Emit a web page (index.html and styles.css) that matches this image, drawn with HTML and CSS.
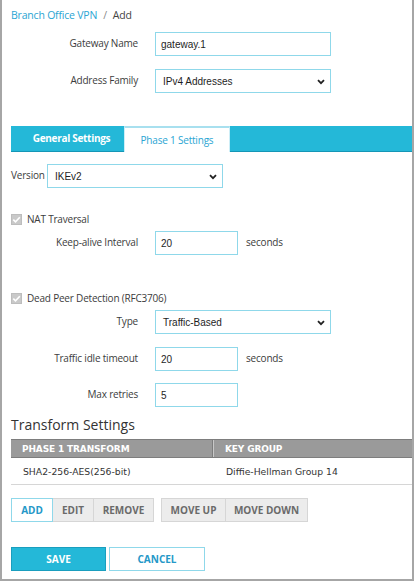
FILE: index.html
```html
<!DOCTYPE html>
<html>
<head>
<meta charset="utf-8">
<link rel="stylesheet" href="styles.css">
</head>
<body>
<div class="page">
  <nav class="crumb"><a class="crumb-link">Branch Office VPN</a><span class="crumb-sep">/</span><span class="crumb-cur">Add</span></nav>

  <div class="row row-gw">
    <span class="lbl">Gateway Name</span>
    <div class="field wide">gateway.1</div>
  </div>
  <div class="row row-af">
    <span class="lbl">Address Family</span>
    <div class="field wide select">IPv4 Addresses<svg class="chev" viewBox="0 0 8 6"><path d="M1 1.2 L4 4.2 L7 1.2" fill="none" stroke="#222" stroke-width="1.8"/></svg></div>
  </div>

  <div class="tabs">
    <div class="tab tab-gen">General Settings</div>
    <div class="tab tab-active">Phase 1 Settings</div>
    <div class="tab-fill"></div>
  </div>

  <div class="version">
    <span class="vlbl">Version</span>
    <div class="field vsel select">IKEv2<svg class="chev" viewBox="0 0 8 6"><path d="M1 1.2 L4 4.2 L7 1.2" fill="none" stroke="#222" stroke-width="1.8"/></svg></div>
  </div>

  <div class="check check-nat">
    <span class="box"><svg viewBox="0 0 11 11"><path d="M2.3 5.6 L4.5 7.8 L8.8 3.2" fill="none" stroke="#fff" stroke-width="1.6"/></svg></span>
    <span>NAT Traversal</span>
  </div>
  <div class="row row-ka">
    <span class="lbl">Keep-alive Interval</span>
    <div class="field narrow">20</div>
    <span class="unit">seconds</span>
  </div>

  <div class="check check-dpd">
    <span class="box"><svg viewBox="0 0 11 11"><path d="M2.3 5.6 L4.5 7.8 L8.8 3.2" fill="none" stroke="#fff" stroke-width="1.6"/></svg></span>
    <span>Dead Peer Detection (RFC3706)</span>
  </div>
  <div class="row row-type">
    <span class="lbl">Type</span>
    <div class="field wide select">Traffic-Based<svg class="chev" viewBox="0 0 8 6"><path d="M1 1.2 L4 4.2 L7 1.2" fill="none" stroke="#222" stroke-width="1.8"/></svg></div>
  </div>
  <div class="row row-idle">
    <span class="lbl">Traffic idle timeout</span>
    <div class="field narrow">20</div>
    <span class="unit">seconds</span>
  </div>
  <div class="row row-retry">
    <span class="lbl">Max retries</span>
    <div class="field narrow">5</div>
  </div>

  <h2 class="section">Transform Settings</h2>
  <div class="tbl">
    <div class="thead">
      <div class="th th1">PHASE 1 TRANSFORM</div>
      <div class="th th2">KEY GROUP</div>
    </div>
    <div class="trow">
      <div class="td td1">SHA2-256-AES(256-bit)</div>
      <div class="td td2">Diffie-Hellman Group 14</div>
    </div>
  </div>

  <div class="toolbar">
    <div class="btn-group">
      <button class="btn btn-add">ADD</button>
      <button class="btn btn-edit">EDIT</button>
      <button class="btn btn-remove">REMOVE</button>
    </div>
    <div class="btn-group">
      <button class="btn btn-up">MOVE UP</button>
      <button class="btn btn-down">MOVE DOWN</button>
    </div>
  </div>

  <div class="actions">
    <button class="act act-save">SAVE</button>
    <button class="act act-cancel">CANCEL</button>
  </div>
</div>
</body>
</html>
```

FILE: styles.css
```css
html, body {
  margin: 0;
  padding: 0;
  background: #fff;
}
.page {
  box-sizing: border-box;
  width: 414px;
  height: 581px;
  border-left: 2px solid #a6a6a6;
  border-right: 2px solid #a6a6a6;
  border-bottom: 2px solid #a6a6a6;
  padding: 7px 0 0 9px;
  font-family: "Open Sans", sans-serif;
  font-size: 10px;
  letter-spacing: -0.2px;
  color: #3c3c3c;
  overflow: hidden;
}
.crumb {
  height: 16px;
  line-height: 16px;
  font-size: 10.5px;
  display: flex;
}
.crumb-link { color: #2aa5d3; }
.crumb-sep { color: #888; margin: 0 6px 0 6px; }
.crumb-cur { color: #444; }

.row {
  display: grid;
  grid-template-columns: 127px auto auto;
  column-gap: 17px;
  align-items: center;
  justify-content: start;
}
.row .lbl {
  text-align: right;
  color: #3c3c3c;
  margin-top: -2px;
}
.row-gw { margin-top: 9px; }
.row-af { margin-top: 13px; }
.row-ka { margin-top: 4px; }
.row-type { margin-top: 4px; }
.row-idle { margin-top: 13px; }
.row-retry { margin-top: 12px; }

.field {
  box-sizing: border-box;
  height: 24px;
  border: 1px solid #8fd8ea;
  font-family: "Liberation Sans", Arial, sans-serif;
  font-size: 10px;
  letter-spacing: 0;
  color: #1e1e1e;
  display: flex;
  align-items: center;
  padding-left: 5px;
  background: #fff;
}
.field.wide { width: 176px; }
.field.narrow { width: 83px; }
.field.select {
  padding-left: 7px;
  position: relative;
}
.chev {
  position: absolute;
  right: 5px;
  top: 9px;
  width: 8px;
  height: 6px;
}
.unit {
  margin-left: -9px;
  color: #3c3c3c;
  margin-top: -2px;
}

.tabs {
  display: flex;
  margin-top: 33px;
  margin-right: -2px;
  height: 26px;
}
.tab {
  box-sizing: border-box;
  height: 26px;
  display: flex;
  align-items: center;
  justify-content: center;
  font-size: 10px;
}
.tab-gen {
  width: 113px;
  background: #24b8d8;
  border-bottom: 1px solid #1596b6;
  color: #fff;
  font-weight: 700;
  letter-spacing: -0.3px;
  padding: 0 0 1px 8px;
}
.tab-active {
  width: 106px;
  background: #fff;
  color: #2aa5d3;
  border-top: 2px solid #a8e0ef;
  border-left: 1px solid #cdeef7;
  border-right: 1px solid #cdeef7;
}
.tab-fill {
  flex: 1;
  background: #24b8d8;
  border-bottom: 1px solid #1596b6;
}

.version {
  display: flex;
  align-items: center;
  margin-top: 12px;
}
.vlbl { width: 36px; margin-top: -2px; }
.field.vsel { width: 176px; }

.check {
  display: flex;
  align-items: center;
  height: 16px;
  color: #3c3c3c;
}
.check-nat { margin-top: 23px; }
.check-dpd { margin-top: 35px; }
.box {
  width: 11px;
  height: 11px;
  box-sizing: border-box;
  background: #c9c9c9;
  border: 1px solid #bdbdbd;
  margin-right: 5px;
  display: flex;
}
.box svg { width: 11px; height: 11px; margin: -1px; }

.section {
  margin: 8px 0 0 0;
  font-size: 14px;
  line-height: 20px;
  letter-spacing: 0;
  font-weight: 400;
  color: #333;
}

.tbl { margin-top: 4px; }
.thead {
  display: grid;
  grid-template-columns: 202px 1fr;
  height: 19px;
  box-sizing: border-box;
  background: #9a9a9a;
  border-top: 1px solid #7d7d7d;
  border-bottom: 1px solid #7d7d7d;
}
.th {
  font-family: "DejaVu Sans", Verdana, sans-serif;
  font-weight: 700;
  font-size: 9px;
  letter-spacing: -0.15px;
  color: #fff;
  display: flex;
  align-items: center;
  padding-left: 11px;
}
.th1 { border-right: 1px solid #7d7d7d; }
.th2 { border-left: 1px solid #c8c8c8; padding-left: 11px; }
.trow {
  display: grid;
  grid-template-columns: 203px 1fr;
  height: 27px;
  box-sizing: border-box;
  border-bottom: 1px solid #d6d6d6;
}
.td {
  font-family: "DejaVu Sans", Verdana, sans-serif;
  font-size: 9.25px;
  letter-spacing: 0;
  color: #333;
  display: flex;
  align-items: center;
  padding-left: 12px;
}
.td2 { padding-left: 12px; }

.toolbar {
  display: flex;
  gap: 7px;
  margin-top: 13px;
}
.btn-group { display: flex; }
.btn {
  box-sizing: border-box;
  height: 24px;
  border: 1px solid #d6d6d6;
  background: #ececec;
  font-family: "Open Sans", sans-serif;
  font-weight: 700;
  font-size: 10px;
  letter-spacing: 0;
  color: #6a6a6a;
  padding: 0;
  margin: 0;
  margin-left: -1px;
}
.btn-group .btn:first-child { margin-left: 0; }
.btn-add {
  width: 42px;
  background: #fff;
  border-color: #8fd8ea;
  color: #2598c8;
  position: relative;
}
.btn-edit { width: 42px; }
.btn-remove { width: 61px; }
.btn-up { width: 65px; }
.btn-down { width: 83px; }

.actions {
  display: flex;
  gap: 3px;
  margin-top: 25px;
}
.act {
  box-sizing: border-box;
  width: 95px;
  height: 24px;
  font-family: "Open Sans", sans-serif;
  font-weight: 700;
  font-size: 10px;
  letter-spacing: 0;
  padding: 0;
  margin: 0;
}
.act-save {
  background: #24b8d8;
  border: 1px solid #1a9ebe;
  color: #fff;
}
.act-cancel {
  background: #fff;
  border: 1px solid #8fd8ea;
  color: #2598c8;
  width: 96px;
}
```
